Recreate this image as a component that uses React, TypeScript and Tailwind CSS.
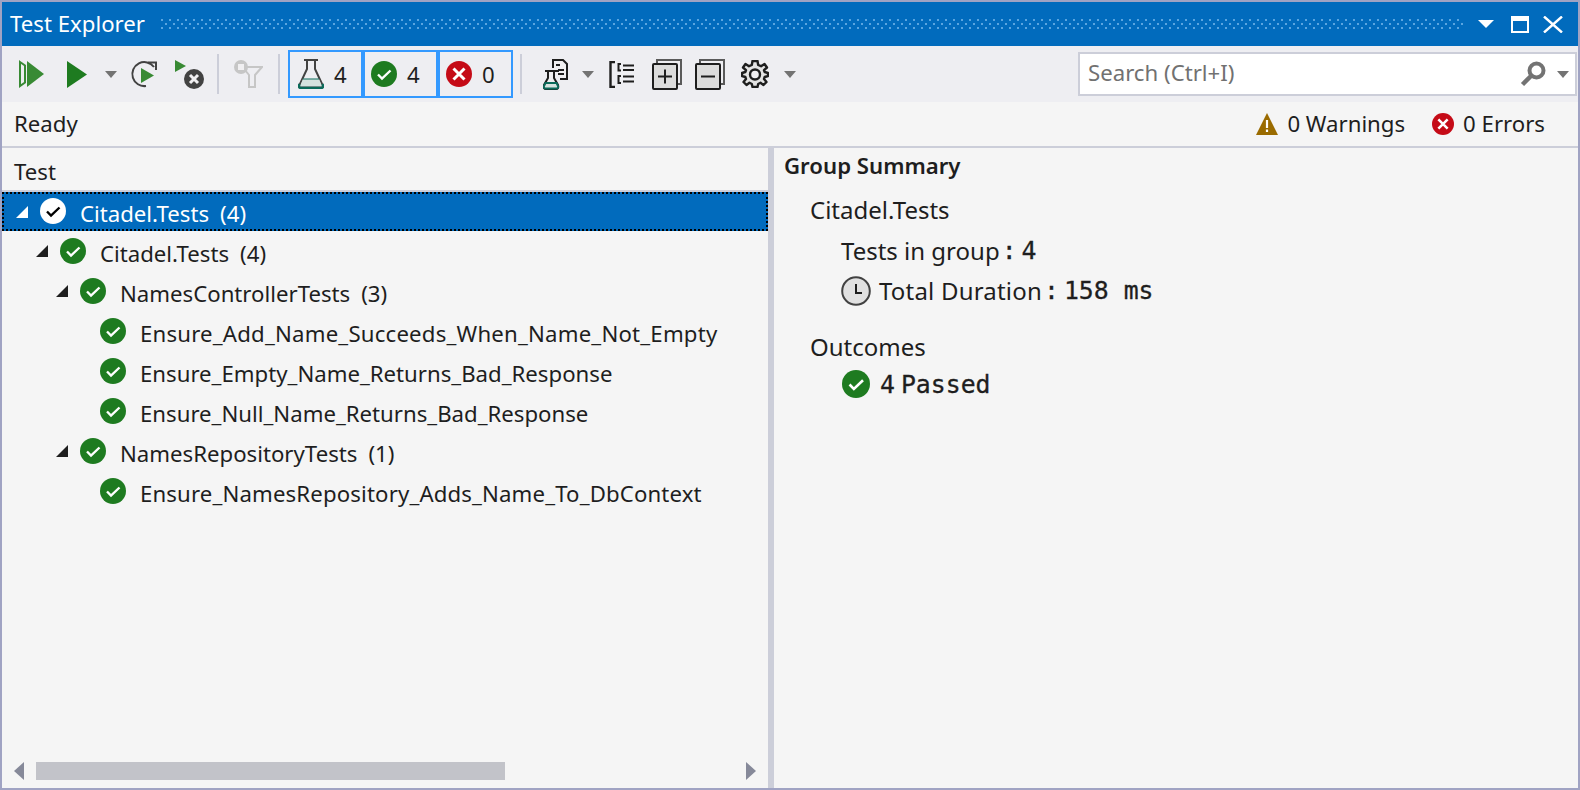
const GREEN = "#1e7b20";

function CheckCircle({ size = 26, bg = GREEN, fg = "#ffffff" }: { size?: number; bg?: string; fg?: string }) {
  return (
    <svg width={size} height={size} viewBox="0 0 26 26" className="shrink-0">
      <circle cx="13" cy="13" r="13" fill={bg} />
      <path d="M7 13.5 L11 17.5 L19.5 9.5" fill="none" stroke={fg} strokeWidth="2.4" />
    </svg>
  );
}

function ErrorCircle({ size = 26 }: { size?: number }) {
  return (
    <svg width={size} height={size} viewBox="0 0 26 26" className="shrink-0">
      <circle cx="13" cy="13" r="13" fill="#c50b17" />
      <path d="M7.5 7.5 L18.5 18.5 M18.5 7.5 L7.5 18.5" fill="none" stroke="#ffffff" strokeWidth="3" />
    </svg>
  );
}

function Caret({ className = "" }: { className?: string }) {
  return (
    <svg width="12" height="7" viewBox="0 0 12 7" className={className}>
      <path d="M0 0 H12 L6 7 Z" fill="#737373" />
    </svg>
  );
}

function RunAllIcon() {
  return (
    <svg width="25" height="28" viewBox="0 0 25 28" className="shrink-0">
      <path d="M1 2 L6 5.5 V22.5 L1 26 Z" fill="none" stroke="#388a34" strokeWidth="2" />
      <path d="M8 1 L25 14 L8 27 Z" fill="#388a34" />
    </svg>
  );
}

function PlayIcon() {
  return (
    <svg width="20" height="27" viewBox="0 0 20 27" className="shrink-0">
      <path d="M0 0 L20 13.5 L0 27 Z" fill={GREEN} />
    </svg>
  );
}

function RepeatIcon() {
  return (
    <svg width="28" height="28" viewBox="0 0 28 28" className="shrink-0">
      <path d="M24 7 A12 12 0 1 0 16 26" fill="none" stroke="#424242" strokeWidth="2" />
      <path d="M18 2.5 H26 V10" fill="none" stroke="#424242" strokeWidth="2" />
      <path d="M11 8 L24 15.5 L11 23 Z" fill="#388a34" />
    </svg>
  );
}

function RunCancelIcon() {
  return (
    <svg width="29" height="29" viewBox="0 0 29 29" className="shrink-0">
      <path d="M0 0 L11 6 L0 12 Z" fill="#388a34" />
      <circle cx="19" cy="19" r="10" fill="#424242" />
      <path d="M15 15 L23 23 M23 15 L15 23" fill="none" stroke="#f0eff1" strokeWidth="3" />
    </svg>
  );
}

function FilterIcon() {
  return (
    <svg width="30" height="30" viewBox="0 0 30 30" className="shrink-0">
      <circle cx="8" cy="8" r="7" fill="#c6c6c6" />
      <rect x="5" y="5" width="6" height="6" fill="#f0eff1" />
      <path d="M13 8 H29 L22 16 V28 H16 V16 L12 11" fill="none" stroke="#c6c6c6" strokeWidth="2" />
    </svg>
  );
}

function FlaskIcon() {
  return (
    <svg width="26" height="30" viewBox="0 0 26 30" className="shrink-0">
      <path d="M6 1 H20 M9 1 V10 L1 27 Q1 28.5 3 28.5 H23 Q25 28.5 25 27 L17 10 V1" fill="none" stroke="#424242" strokeWidth="2" />
      <path d="M5 20 H21 L24 27 H2 Z" fill="#d6e2df" />
      <path d="M1.5 25 Q0 29 3 29 H23 Q26 29 24.5 25" fill="none" stroke="#0b6a5a" strokeWidth="2.4" />
      <path d="M5 20 H21" stroke="#0b6a5a" strokeWidth="1" />
    </svg>
  );
}

function PlaylistIcon() {
  return (
    <svg width="25" height="31" viewBox="0 0 25 31" className="shrink-0">
      <path d="M10 9 V1 H20 L24 5 V20 H17" fill="#f0eff1" stroke="#1e1e1e" strokeWidth="2" />
      <path d="M13 6 H17 M15 11 H21 M15 15 H21" stroke="#1e1e1e" strokeWidth="2" />
      <path d="M2 12 H16 M5 12 V19 L1 26 Q0 30 3 30 H13 Q16 30 15 26 L11 19 V12" fill="#f0eff1" stroke="#1e1e1e" strokeWidth="2" />
      <path d="M2.5 24 H13.5 L15 27 Q15.5 29.5 13 29.5 H3 Q0.5 29.5 1 27 Z" fill="#d6e2df" stroke="#0b6a5a" strokeWidth="2" />
    </svg>
  );
}

function HierarchyIcon() {
  return (
    <svg width="26" height="27" viewBox="0 0 26 27" className="shrink-0">
      <path d="M6 1 H1.5 V26 H6" fill="none" stroke="#1e1e1e" strokeWidth="2.4" />
      <path d="M12 3 H9.5 V9.5 H12 M12 15 H9.5 V22 H12" fill="none" stroke="#1e1e1e" strokeWidth="2" />
      <path d="M14 4.5 H25 M14 9 H25 M14 15.5 H25 M14 20.5 H25" stroke="#1e1e1e" strokeWidth="2" />
    </svg>
  );
}

function StackIcon({ plus }: { plus: boolean }) {
  return (
    <svg width="30" height="31" viewBox="0 0 30 31" className="shrink-0">
      <path d="M5 4 V1 H29 V25 H26" fill="none" stroke="#5a5a5a" strokeWidth="2" />
      <rect x="1" y="5" width="24" height="25" rx="1" fill="#dcdcdc" stroke="#1e1e1e" strokeWidth="2" />
      <path d={plus ? "M6 17.5 H20 M13 10.5 V24.5" : "M6 17.5 H20"} stroke="#1e1e1e" strokeWidth="2" />
    </svg>
  );
}

function GearIcon() {
  return (
    <svg width="28" height="28" viewBox="0 0 28 28" className="shrink-0">
      <path
        d="M11.5 1 H16.5 L17.2 5 L20 6.2 L23.5 4 L26 7.5 L23 10.2 L23.7 12 L27 13 V16 L23.7 17 L23 19 L25.5 22 L22.5 25 L19.5 22.8 L17.2 24 L16.5 27 H11.5 L10.8 24 L8.5 22.8 L5.5 25 L2.5 22 L5 19 L4.3 17 L1 16 V13 L4.3 12 L5 10.2 L2 7.5 L4.5 4 L8 6.2 L10.8 5 Z"
        fill="#e4e4e4"
        stroke="#1e1e1e"
        strokeWidth="2.4"
        strokeLinejoin="round"
      />
      <circle cx="14" cy="14.5" r="5" fill="#f0eff1" stroke="#1e1e1e" strokeWidth="2.4" />
    </svg>
  );
}

function SearchIcon() {
  return (
    <svg width="26" height="26" viewBox="0 0 26 26" className="shrink-0">
      <circle cx="16.5" cy="9.5" r="7" fill="none" stroke="#737373" strokeWidth="4" />
      <path d="M11 15 L2.5 23.5" stroke="#737373" strokeWidth="4.5" />
    </svg>
  );
}

function ClockIcon() {
  return (
    <svg width="30" height="30" viewBox="0 0 30 30" className="shrink-0">
      <circle cx="15" cy="15" r="13.8" fill="#e1e1e1" stroke="#424242" strokeWidth="2" />
      <path d="M15 8 V17 H21" fill="none" stroke="#1e1e1e" strokeWidth="2" />
    </svg>
  );
}

function Separator({ className = "" }: { className?: string }) {
  return <div className={`h-[40px] w-[2px] shrink-0 bg-[#ccced9] ${className}`} />;
}

function TreeRow({ indent, label, count, arrow = true, tracking = "" }: { indent: string; label: string; count?: number; arrow?: boolean; tracking?: string }) {
  return (
    <div className={`flex h-[40px] items-center ${indent}`}>
      {arrow ? (
        <svg width="12" height="12" viewBox="0 0 12 12" className="mr-[12px] shrink-0">
          <path d="M12 0 V12 H0 Z" fill="#1e1e1e" />
        </svg>
      ) : null}
      <CheckCircle />
      <span className={`mt-[6px] ml-[14px] whitespace-nowrap ${tracking}`}>{label}</span>
      {count !== undefined ? <span className="mt-[6px] ml-[11px]">({count})</span> : null}
    </div>
  );
}

function FilterTab({ icon, count, className }: { icon: React.ReactNode; count: number; className: string }) {
  return (
    <div className={`flex h-full items-center border-2 border-[#3399ff] ${className}`}>
      {icon}
      <span className="ml-[10px] pt-[2px]">{count}</span>
    </div>
  );
}

export default function App() {
  return (
    <div className="flex h-[790px] w-[1580px] flex-col overflow-hidden border-2 border-[#a0a3c3] bg-[#f5f5f5] font-['Noto_Sans',sans-serif] text-[22.2px] text-[#1e1e1e]">
      {/* Title bar */}
      <div className="flex h-[44px] shrink-0 items-center bg-[#016bbd] text-white">
        <span className="ml-[8px] whitespace-nowrap">Test Explorer</span>
        <svg className="ml-[16px] h-[10px] flex-1" height="10">
          <defs>
            <pattern id="grip" width="8" height="8" patternUnits="userSpaceOnUse">
              <rect x="0" y="0" width="2" height="2" fill="#5aa5e0" />
              <rect x="4" y="4" width="2" height="2" fill="#5aa5e0" />
            </pattern>
          </defs>
          <rect width="100%" height="10" fill="url(#grip)" />
        </svg>
        <svg width="16" height="8" viewBox="0 0 16 8" className="ml-[14px] shrink-0">
          <path d="M0 0 H16 L8 8 Z" fill="#ffffff" />
        </svg>
        <div className="ml-[17px] h-[17px] w-[18px] shrink-0 border-2 border-t-[5px] border-white" />
        <svg width="20" height="17" viewBox="0 0 20 17" className="mr-[15px] ml-[14px] shrink-0">
          <path d="M1 0.5 L19 16.5 M19 0.5 L1 16.5" stroke="#ffffff" strokeWidth="2.4" />
        </svg>
      </div>

      {/* Toolbar */}
      <div className="flex h-[56px] shrink-0 items-center bg-[#eeeef2]">
        <div className="ml-[17px] flex items-center">
          <RunAllIcon />
        </div>
        <div className="ml-[23px]">
          <PlayIcon />
        </div>
        <Caret className="ml-[18px]" />
        <div className="ml-[13px]">
          <RepeatIcon />
        </div>
        <div className="ml-[17px]">
          <RunCancelIcon />
        </div>
        <Separator className="ml-[13px]" />
        <div className="ml-[14px]">
          <FilterIcon />
        </div>
        <Separator className="ml-[15px]" />
        <div className="ml-[8px] flex h-[48px] w-[225px] shrink-0">
          <FilterTab className="w-[75px] pl-[8px]" icon={<FlaskIcon />} count={4} />
          <FilterTab className="w-[75px] pl-[6px]" icon={<CheckCircle />} count={4} />
          <FilterTab className="w-[75px] pl-[6px]" icon={<ErrorCircle />} count={0} />
        </div>
        <Separator className="ml-[7px]" />
        <div className="ml-[21px]">
          <PlaylistIcon />
        </div>
        <Caret className="ml-[14px]" />
        <div className="ml-[15px]">
          <HierarchyIcon />
        </div>
        <div className="ml-[17px]">
          <StackIcon plus />
        </div>
        <div className="ml-[13px]">
          <StackIcon plus={false} />
        </div>
        <div className="ml-[16px]">
          <GearIcon />
        </div>
        <Caret className="ml-[15px]" />
        <div className="mr-[1px] ml-auto flex h-[44px] w-[499px] shrink-0 items-center border-2 border-[#ccced9] bg-white pr-[6px] pl-[8px] text-[#717171]">
          <span className="mb-[2px]">Search (Ctrl+I)</span>
          <div className="ml-auto">
            <SearchIcon />
          </div>
          <Caret className="ml-[11px]" />
        </div>
      </div>

      {/* Status */}
      <div className="flex h-[46px] shrink-0 items-center border-b-2 border-[#ccced9] pr-[33px] pl-[12px]">
        <span>Ready</span>
        <svg width="22" height="22" viewBox="0 0 22 22" className="ml-auto shrink-0">
          <path d="M11 0 L22 22 H0 Z" fill="#9a6b00" />
          <path d="M11 7 V15 M11 16.5 V19" stroke="#ffffff" strokeWidth="2.2" />
        </svg>
        <span className="ml-[9px]">0 Warnings</span>
        <div className="ml-[27px]">
          <ErrorCircle size={22} />
        </div>
        <span className="ml-[9px]">0 Errors</span>
      </div>

      {/* Main */}
      <div className="flex min-h-0 flex-1">
        <div className="flex w-[766px] shrink-0 flex-col">
          <div className="flex h-[44px] shrink-0 items-center border-b-2 border-[#ccced9] pt-[6px] pl-[12px]">Test</div>
          <div className="min-h-0 flex-1">
            <div className="flex h-[39px] items-center border-2 border-dotted border-black bg-[#016bbd] pl-[12px] text-white">
              <svg width="12" height="12" viewBox="0 0 12 12" className="mr-[12px] shrink-0">
                <path d="M12 0 V12 H0 Z" fill="#ffffff" />
              </svg>
              <div className="mb-[2px]">
                <CheckCircle bg="#ffffff" fg="#000000" />
              </div>
              <span className="mt-[5px] ml-[14px]">Citadel.Tests</span>
              <span className="mt-[5px] ml-[11px]">(4)</span>
            </div>
            <TreeRow indent="pl-[34px]" label="Citadel.Tests" count={4} />
            <TreeRow indent="pl-[54px]" label="NamesControllerTests" count={3} />
            <TreeRow indent="pl-[98px]" label="Ensure_Add_Name_Succeeds_When_Name_Not_Empty" arrow={false} tracking="tracking-[0.2px]" />
            <TreeRow indent="pl-[98px]" label="Ensure_Empty_Name_Returns_Bad_Response" arrow={false} />
            <TreeRow indent="pl-[98px]" label="Ensure_Null_Name_Returns_Bad_Response" arrow={false} />
            <TreeRow indent="pl-[54px]" label="NamesRepositoryTests" count={1} />
            <TreeRow indent="pl-[98px]" label="Ensure_NamesRepository_Adds_Name_To_DbContext" arrow={false} tracking="tracking-[0.14px]" />
          </div>
          {/* Scrollbar */}
          <div className="mb-[8px] flex h-[18px] shrink-0 items-center pr-[12px] pl-[12px]">
            <svg width="10" height="18" viewBox="0 0 10 18" className="shrink-0">
              <path d="M10 0 V18 L0 9 Z" fill="#868999" />
            </svg>
            <div className="ml-[12px] h-[18px] w-[469px] bg-[#c2c3c9]" />
            <svg width="10" height="18" viewBox="0 0 10 18" className="ml-auto shrink-0">
              <path d="M0 0 V18 L10 9 Z" fill="#868999" />
            </svg>
          </div>
        </div>

        <div className="w-[6px] shrink-0 bg-[#ccced9]" />

        <div className="min-w-0 flex-1">
          <div className="flex h-[36px] items-center pl-[10px] font-semibold">Group Summary</div>
          <div className="mt-[6px] flex h-[40px] items-center pl-[36px] text-[24px]">Citadel.Tests</div>
          <div className="flex h-[40px] items-center pt-[2px] pl-[67px] text-[24px]">
            <span>Tests in group</span>
            <span className="ml-[2px] font-['DejaVu_Sans_Mono',monospace] text-[24.8px] [-webkit-text-stroke:0.3px]">:</span>
            <span className="ml-[5px] font-['DejaVu_Sans_Mono',monospace] text-[24.8px] [-webkit-text-stroke:0.3px]">4</span>
          </div>
          <div className="flex h-[40px] items-center pt-[2px] pl-[67px] text-[24px]">
            <ClockIcon />
            <span className="ml-[8px] tracking-[0.2px]">Total Duration</span>
            <span className="ml-[2px] font-['DejaVu_Sans_Mono',monospace] text-[24.8px] [-webkit-text-stroke:0.3px]">:</span>
            <span className="ml-[5px] font-['DejaVu_Sans_Mono',monospace] text-[24.8px] whitespace-pre [-webkit-text-stroke:0.3px]">158 ms</span>
          </div>
          <div className="mt-[16px] flex h-[40px] items-center pt-[2px] pl-[36px] text-[24px]">Outcomes</div>
          <div className="flex h-[36px] items-center pl-[68px] font-['DejaVu_Sans_Mono',monospace] text-[24.8px] [-webkit-text-stroke:0.3px]">
            <CheckCircle size={28} />
            <span className="mt-[2px] ml-[10px]">4</span>
            <span className="mt-[2px] ml-[6px]">Passed</span>
          </div>
        </div>
      </div>
    </div>
  );
}
